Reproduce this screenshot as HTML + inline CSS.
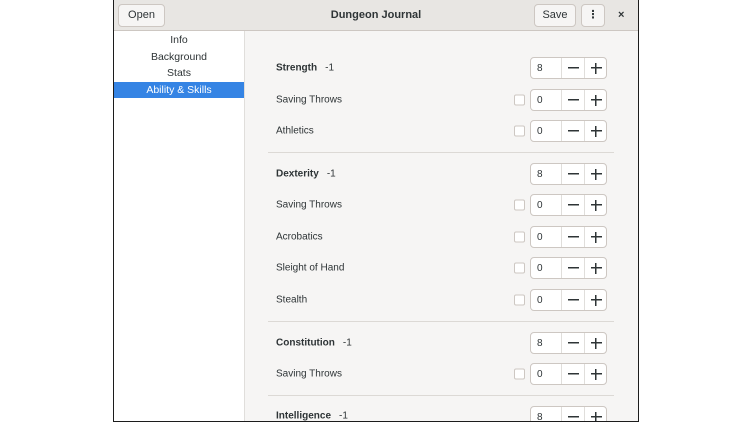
<!DOCTYPE html>
<html><head><style>
*{margin:0;padding:0;box-sizing:border-box}
body{width:752px;height:423px;background:#fff;font-family:"Liberation Sans","DejaVu Sans",sans-serif;font-size:10.5px;color:#2e3436;position:relative;overflow:hidden}
.win{position:absolute;left:113px;top:0;width:526px;height:422px;border:1px solid #1c1c1c;border-top:none;background:#f6f5f4;overflow:hidden}
.hdr{position:absolute;left:0;top:0;width:100%;height:31px;background:#e8e6e3;border-bottom:1px solid #cdc7c2}
.btn{position:absolute;top:4px;height:23px;border:1px solid #cdc7c2;border-radius:4px;background:#f6f5f4;font-size:11px;line-height:21px;text-align:center}
.title{position:absolute;left:0;width:100%;top:9px;text-align:center;font-weight:bold;font-size:11px}
.side{position:absolute;left:0;top:31px;width:131px;bottom:0;background:#fff;border-right:1px solid #e0dedb;padding-top:1px}
.side div{height:16.5px;line-height:16.5px;text-align:center;font-size:10.5px}
.side .sel{background:#3584e4;color:#fff}
.a{position:absolute}
.lbl{position:absolute;left:162px;font-size:10px;transform:translateY(-50%)}
.lbl b{margin-right:8px}
.spin{position:absolute;left:416px;width:77px;height:22px;border:1px solid #cdc7c2;border-radius:4px;background:#fff;transform:translateY(-50%);font-size:10px}
.spin span{position:absolute;left:6px;top:5px}
.spin i{position:absolute;top:0;height:20px;border-left:1px solid #e0dedb;width:23px}
.spin i.m{left:30px;background:linear-gradient(#2e3436,#2e3436) center/11px 1.5px no-repeat}
.spin i.p{left:53px;background:linear-gradient(#2e3436,#2e3436) center/11px 1.5px no-repeat,linear-gradient(#2e3436,#2e3436) center/1.5px 11px no-repeat}
.cb{position:absolute;left:400px;width:11px;height:11px;border:1px solid #cdc7c2;border-radius:2px;background:#fff;transform:translateY(-50%)}
.sep{position:absolute;left:154px;width:346px;height:1px;background:#dcd9d5}
</style></head><body>
<div class="win">
<div class="hdr">
<div class="btn" style="left:4px;width:47px">Open</div>
<div class="title">Dungeon Journal</div>
<div class="btn" style="left:420px;width:42px">Save</div>
<div class="btn" style="left:467px;width:24px;font-weight:bold">⋮</div>
<div class="a" style="left:504px;top:9px;font-size:11px;font-weight:bold">×</div>
</div>
<div class="side">
<div>Info</div><div>Background</div><div>Stats</div><div class="sel">Ability &amp; Skills</div>
</div>
<div class="lbl" style="top:68px"><b>Strength</b>-1</div><div class="spin" style="top:68px"><span>8</span><i class="m"></i><i class="p"></i></div>
<div class="lbl" style="top:100px">Saving Throws</div><div class="cb" style="top:100px"></div><div class="spin" style="top:100px"><span>0</span><i class="m"></i><i class="p"></i></div>
<div class="lbl" style="top:131px">Athletics</div><div class="cb" style="top:131px"></div><div class="spin" style="top:131px"><span>0</span><i class="m"></i><i class="p"></i></div>
<div class="sep" style="top:152px"></div>
<div class="lbl" style="top:174px"><b>Dexterity</b>-1</div><div class="spin" style="top:174px"><span>8</span><i class="m"></i><i class="p"></i></div>
<div class="lbl" style="top:205px">Saving Throws</div><div class="cb" style="top:205px"></div><div class="spin" style="top:205px"><span>0</span><i class="m"></i><i class="p"></i></div>
<div class="lbl" style="top:237px">Acrobatics</div><div class="cb" style="top:237px"></div><div class="spin" style="top:237px"><span>0</span><i class="m"></i><i class="p"></i></div>
<div class="lbl" style="top:268px">Sleight of Hand</div><div class="cb" style="top:268px"></div><div class="spin" style="top:268px"><span>0</span><i class="m"></i><i class="p"></i></div>
<div class="lbl" style="top:300px">Stealth</div><div class="cb" style="top:300px"></div><div class="spin" style="top:300px"><span>0</span><i class="m"></i><i class="p"></i></div>
<div class="sep" style="top:321px"></div>
<div class="lbl" style="top:343px"><b>Constitution</b>-1</div><div class="spin" style="top:343px"><span>8</span><i class="m"></i><i class="p"></i></div>
<div class="lbl" style="top:374px">Saving Throws</div><div class="cb" style="top:374px"></div><div class="spin" style="top:374px"><span>0</span><i class="m"></i><i class="p"></i></div>
<div class="sep" style="top:395px"></div>
<div class="lbl" style="top:416px"><b>Intelligence</b>-1</div><div class="spin" style="top:417px"><span>8</span><i class="m"></i><i class="p"></i></div>
</div>
</body></html>
